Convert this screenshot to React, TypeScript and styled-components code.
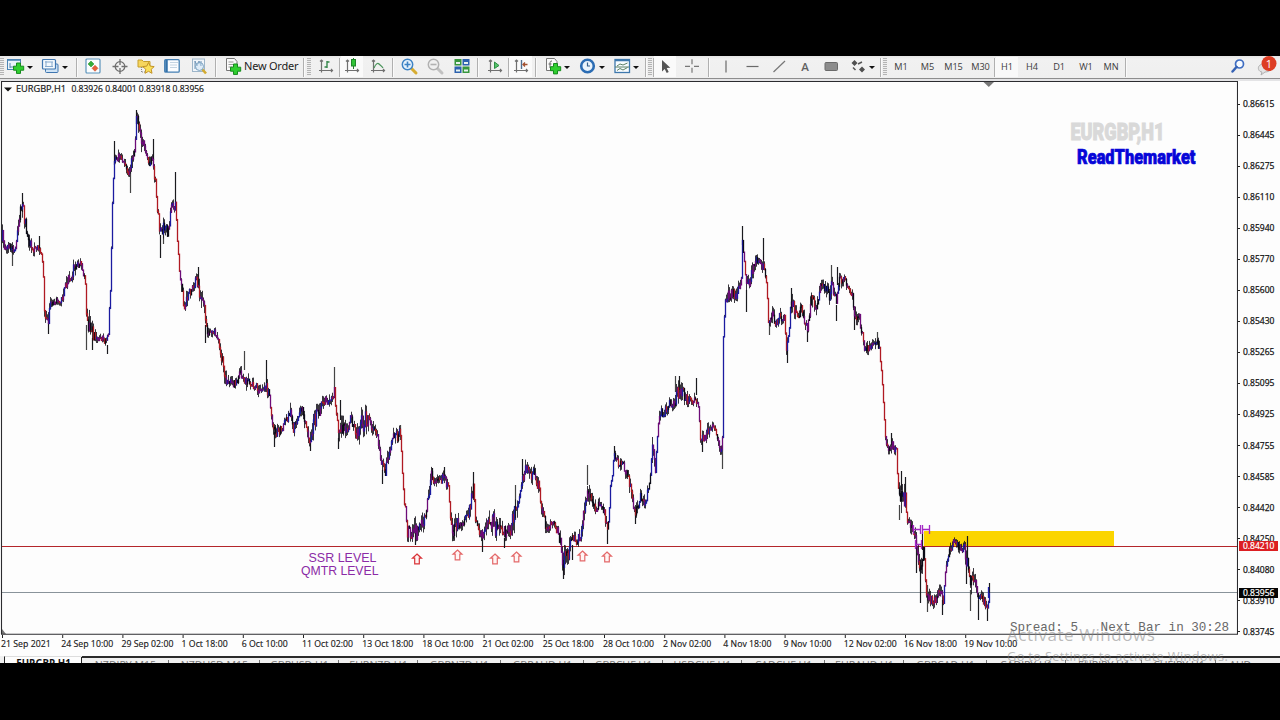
import React from 'react';
import styled, { createGlobalStyle } from 'styled-components';

const Global = createGlobalStyle`
  * { box-sizing: border-box; }
  body { margin: 0; background: #000; font-family: "Open Sans", "Noto Sans", sans-serif; }
`;

const Screen = styled.div`
  width: 1280px;
  height: 720px;
  padding: 56px 0 57px;
  background: #000;
  overflow: hidden;
`;
const Terminal = styled.div`
  position: relative;
  display: flex;
  flex-direction: column;
  height: 607px;
  overflow: hidden;
  background: #fdfdfd;
`;
const Toolbar = styled.div`
  display: flex;
  align-items: center;
  height: 23px;
  flex: none;
  background: linear-gradient(#e6e6e6, #f1f1f1 15%, #efefef);
  border-bottom: 1px solid #8d8d8d;
`;
const Strip = styled.div`
  height: 2px;
  flex: none;
  background: #e4e4e6;
`;
const IconCell = styled.span<{ $gap: number; $pressed?: boolean }>`
  display: flex;
  flex: none;
  width: 18px;
  height: 18px;
  margin: -2px 0 0 ${(p) => p.$gap}px;
  background: ${(p) => (p.$pressed ? '#fafafa' : 'transparent')};
  box-shadow: ${(p) => (p.$pressed ? '0 0 0 2px #fafafa' : 'none')};
`;
const Caret = styled.span<{ $gap: number }>`
  flex: none;
  width: 6px;
  margin: 0 0 0 ${(p) => p.$gap}px;
  border: 3px solid transparent;
  border-top-color: #111;
  border-bottom: 0;
`;
const Separator = styled.span<{ $gap: number }>`
  flex: none;
  width: 2px;
  height: 19px;
  margin-left: ${(p) => p.$gap}px;
  border-left: 1px solid #b0b0b0;
  background: #fafafa;
`;
const Grip = styled.span<{ $gap: number }>`
  flex: none;
  width: 4px;
  height: 18px;
  margin-left: ${(p) => p.$gap}px;
  background: repeating-linear-gradient(#b4b4b4 0 1px, #eee 1px 2px);
`;
const OrderLabel = styled.span`
  flex: none;
  width: 56px;
  margin: -3px 0 0 2px;
  font-family: "Noto Sans", sans-serif;
  font-size: 11px;
  letter-spacing: -0.22px;
  line-height: 16px;
  color: #1c1c1c;
  white-space: nowrap;
`;
const Period = styled.span<{ $w: number; $active?: boolean }>`
  flex: none;
  width: ${(p) => p.$w}px;
  height: 20px;
  line-height: 20px;
  text-align: center;
  font-size: 9.2px;
  letter-spacing: -0.1px;
  color: #3c3c3c;
  background: ${(p) => (p.$active ? '#f9f9f9' : 'transparent')};
`;
const Workspace = styled.div`
  display: flex;
  height: 554px;
  flex: none;
`;
const PriceAxis = styled.div`
  position: relative;
  display: flex;
  flex-direction: column;
  justify-content: space-between;
  width: 42px;
  padding: 17px 0 0;
  height: 557px;
`;
const Price = styled.span`
  display: flex;
  align-items: center;
  height: 12px;
  gap: 3px;
  line-height: 12px;
  font-size: 8.5px;
  color: #141414;
  -webkit-text-stroke: 0.25px #141414;
  &::before {
    content: '';
    width: 2px;
    height: 1px;
    background: #222;
  }
`;
const PriceTag = styled.span<{ $top: number; $color: string }>`
  position: absolute;
  left: 1px;
  top: ${(p) => p.$top}px;
  width: 39px;
  height: 10px;
  padding-left: 4px;
  line-height: 10px;
  font-size: 8.5px;
  color: #fff;
  -webkit-text-stroke: 0.2px #fff;
  background: ${(p) => p.$color};
`;
const TimeAxis = styled.div`
  display: flex;
  flex: none;
  height: 21px;
  padding: 1px 0 0 1px;
`;
const Time = styled.span`
  flex: none;
  width: 60.2px;
  line-height: 16px;
  font-size: 8.7px;
  letter-spacing: 0.04px;
  white-space: nowrap;
  color: #161616;
  -webkit-text-stroke: 0.15px #161616;
`;
const Tabs = styled.div`
  display: flex;
  flex: none;
  height: 8px;
  padding-left: 4px;
  overflow: hidden;
  background: #f0f0f0;
`;
const Tab = styled.span<{ $w: number; $active?: boolean }>`
  flex: none;
  position: relative;
  width: ${(p) => p.$w}px;
  height: 20px;
  text-align: center;
  line-height: 14px;
  font-size: ${(p) => (p.$active ? 9.7 : 10.6)}px;
  white-space: nowrap;
  overflow: hidden;
  font-weight: ${(p) => (p.$active ? 700 : 400)};
  color: ${(p) => (p.$active ? '#111' : '#777')};
  background: ${(p) => (p.$active ? '#fdfdfd' : '#f0f0f0')};
  border-top: ${(p) => (p.$active ? '1px solid #ddd' : '2px solid #2b2b2b')};
  border-left: ${(p) => (p.$active ? '1px solid #222' : '0')};
  &::after {
    content: '';
    position: absolute;
    right: 0;
    top: ${(p) => (p.$active ? 0 : 2)}px;
    width: 1px;
    height: 12px;
    background: ${(p) => (p.$active ? '#222' : '#777')};
  }
`;
const Activation = styled.div`
  position: absolute;
  left: 1007px;
  top: 568px;
  color: rgba(130, 130, 130, 0.55);
  white-space: nowrap;
`;
const ActivationTitle = styled.div`
  font-size: 17px;
  line-height: 22px;
  letter-spacing: 0.55px;
`;
const ActivationHint = styled.div`
  font-size: 12.8px;
  line-height: 20px;
  letter-spacing: 0.33px;
`;

/* ---------- toolbar glyphs, all on an 18 x 18 grid ---------- */
const Plus = ({ x = 7, y = 5.5 }: { x?: number; y?: number }) => (
  <path
    transform={`translate(${x} ${y})`}
    d="M3.500 .5h4v3.200h3.200v4H7.500v3.200h-4V7.700H.5v-4h3z"
    fill="#2fce2f"
    stroke="#168a1e"
    strokeWidth="1"
  />
);
const Axes = () => (
  <path d="M4.500 3v12.500M2 13.500h13.500M3 4.500l1.500-1.500 1.500 1.500M14 12l1.500 1.500L14 15" fill="none" stroke="#707070" strokeWidth="1.200" />
);
const Lens = ({ color, handle, plus }: { color: string; handle: string; plus?: boolean }) => (
  <>
    <path d="M11 11l5 5" stroke={handle} strokeWidth="3" strokeLinecap="round" />
    <circle cx="7.500" cy="7.500" r="5.200" fill={plus ? '#e6f2fc' : '#f0f0f0'} stroke={color} strokeWidth="1.500" />
    <path d={plus ? 'M4.500 7.500h6M7.500 4.500v6' : 'M4.500 7.500h6'} stroke={color} strokeWidth="1.600" />
  </>
);

const glyphs: Record<string, React.ReactNode> = {
  newChart: (
    <>
      <rect x="1.500" y="2.500" width="13" height="10" fill="#e9f3fb" stroke="#4b84b4" />
      <path d="M2 3.500h12" stroke="#6c9cc4" />
      <path d="M4 11V6M4 10h5" stroke="#5a85ad" fill="none" />
      <Plus />
    </>
  ),
  profiles: (
    <>
      <rect x="4.500" y="7" width="12.500" height="8.500" rx="1" fill="#cfe3f5" stroke="#3f76b0" />
      <rect x="1.500" y="2.500" width="13" height="9.500" rx="1" fill="#f2f8fd" stroke="#3f76b0" strokeWidth="1.200" />
      <path d="M4 5h8M4 9.500h8M5 4v6M11 5v5" stroke="#86a9cd" />
    </>
  ),
  market: (
    <>
      <rect x="2" y="2" width="14" height="14" rx="1" fill="#fbfdfe" stroke="#5b93bb" strokeWidth="1.200" />
      <path d="M7 4l3 3-3 3-3-3z" fill="#35ad38" stroke="#258a2a" strokeWidth=".5" />
      <path d="M11 8.300l3 3-3 3-3-3z" fill="#e8603a" stroke="#c14422" strokeWidth=".5" />
    </>
  ),
  target: (
    <>
      <circle cx="9" cy="9.500" r="4.800" fill="none" stroke="#6f6f6f" strokeWidth="1.300" />
      <path d="M9 2v6M9 11v6M1.500 9.500h6M10.500 9.500h6" stroke="#6f6f6f" strokeWidth="1.300" />
    </>
  ),
  navigator: (
    <>
      <path d="M1 3h4l1.500 1.500H13V10H1z" fill="#f6d65f" stroke="#c59e2d" />
      <path d="M4.500 10v6M5 15h4" stroke="#888" strokeDasharray="1 1" />
      <path d="M11.500 5.500l1.700 3.600 4 .5-3 2.700.8 4-3.500-2-3.500 2 .8-4-3-2.700 4-.5z" fill="#fae05b" stroke="#c39325" />
    </>
  ),
  dataPanel: (
    <>
      <rect x="1.700" y="2.700" width="14.500" height="12.500" rx="1" fill="#fbfdff" stroke="#447fb3" strokeWidth="1.300" />
      <path d="M3.500 3v12" stroke="#3472aa" strokeWidth="2.500" />
      <path d="M7 5.500h8M7 8h7M7 10.500h7" stroke="#c4d4e2" />
    </>
  ),
  tester: (
    <>
      <rect x="2.500" y="2" width="12" height="12.500" fill="#f0f5fa" stroke="#9db5c9" />
      <path d="M5 12V4l2 5 2-5 2 5V4" fill="none" stroke="#7195b6" />
      <path d="M12 12l4 4.500" stroke="#d3ab30" strokeWidth="2.600" />
      <circle cx="9.500" cy="9.500" r="4" fill="#cfe4f588" stroke="#7da3c2" />
    </>
  ),
  order: (
    <>
      <path d="M2.500 1.500h8l2.500 3v9h-10.500z" fill="#fafafa" stroke="#777" />
      <path d="M4.500 5h5M4.500 7.500h6M4.500 10h4" stroke="#999" />
      <Plus x={6} y={6.5} />
    </>
  ),
  bars: (
    <>
      <Axes />
      <path d="M10 4v7M10 5h2.500M7.500 10H10" stroke="#35864a" strokeWidth="1.400" />
    </>
  ),
  candles: (
    <>
      <Axes />
      <path d="M10.500 1v11" stroke="#257c2b" />
      <rect x="8.500" y="2.500" width="4" height="6.500" fill="#30c436" stroke="#20852a" />
    </>
  ),
  line: (
    <>
      <Axes />
      <path d="M5 11c2-5 4-5 5-4s3 2 4 4" fill="none" stroke="#4b955c" strokeWidth="1.200" />
    </>
  ),
  zoomIn: <Lens color="#3d83c5" handle="#d6ac32" plus />,
  zoomOut: <Lens color="#b1b1b1" handle="#c1c1c1" />,
  tile: (
    <>
      <path d="M1.500 2h7v6.500h-7zM9.500 9.500h7V16h-7z" fill="#37963d" />
      <path d="M9.500 2h7v6.500h-7zM1.500 9.500h7V16h-7z" fill="#2c61ae" />
      <path d="M3 5h4v2H3zM11 5h4v2h-4zM3 12.500h4v2H3zM11 12.500h4v2h-4z" fill="#e8f3ef" />
    </>
  ),
  scroll: (
    <>
      <Axes />
      <path d="M8.500 5l4.500 3.500-4.500 3z" fill="#55c36a" stroke="#2d8d44" />
    </>
  ),
  shift: (
    <>
      <Axes />
      <path d="M9.500 3v9" stroke="#4f6e8f" strokeWidth="1.400" />
      <path d="M11 7.500h4.500M13 5.500l-2 2 2 2" fill="none" stroke="#a3502f" strokeWidth="1.300" />
    </>
  ),
  indicators: (
    <>
      <path d="M2.500 1.500h8l2.500 3v9h-10.500z" fill="#fafafa" stroke="#777" />
      <path d="M8 4c-2 0-2 1-2 3v4M4.500 7h3" fill="none" stroke="#666" />
      <Plus x={6} y={6} />
    </>
  ),
  clock: (
    <>
      <circle cx="8.500" cy="9" r="6.300" fill="#eaf4fc" stroke="#2c6db4" strokeWidth="2.600" />
      <path d="M8.500 5.500V9H11" fill="none" stroke="#345f8a" strokeWidth="1.200" />
    </>
  ),
  template: (
    <>
      <rect x="2" y="2.500" width="14.500" height="13" fill="#f8fcff" stroke="#3e78ad" strokeWidth="1.300" />
      <path d="M2 3.500h14.500" stroke="#3e78ad" strokeWidth="1.500" />
      <path d="M4 9l3-2 3 1 4.500-2M4 13.500l3-2 3 1.500 4.500-2.500M2 10h14" fill="none" stroke="#5c8065" />
    </>
  ),
  cursor: <path d="M6 3v11.500l2.700-2.600 2 4 2-1-2-3.900 3.600-.2z" fill="#555" />,
  cross: <path d="M9 2.300v5M9 10.800v5M2 9.300h5M11 9.300h5" stroke="#777" strokeWidth="1.200" />,
  vertical: <path d="M9 3.500v12" stroke="#6a6a6a" strokeWidth="1.200" />,
  horizontal: <path d="M3.500 9.500h12" stroke="#6a6a6a" strokeWidth="1.200" />,
  trend: <path d="M3.500 15L15 4" stroke="#777" strokeWidth="1.200" />,
  text: (
    <text x="9" y="14" textAnchor="middle" fontSize="11.500" fontWeight="600" fill="#616161">
      A
    </text>
  ),
  rect: <rect x="3" y="5.500" width="12.500" height="8" rx="1" fill="#8c8c8c" stroke="#6a6a6a" />,
  arrows: (
    <>
      <path d="M5.500 3l3 3-3 3-3-3zM13 9.500l3 3-3 3-3-3z" fill="#505050" />
      <path d="M4 10.500l2.500 2.500M9 7l4-2" stroke="#555" strokeWidth="1.500" />
    </>
  ),
  search: (
    <>
      <circle cx="10.500" cy="7" r="4" fill="#f6faff" stroke="#3e6dc1" strokeWidth="1.700" />
      <path d="M7.500 10L3.500 14.500" stroke="#3662b4" strokeWidth="2.500" strokeLinecap="round" />
    </>
  ),
  alert: (
    <>
      <path d="M5 7c-7 1-5 8-1 8l-1 3 4-3c5 0 7-3 5-6z" fill="#e4e4e4" stroke="#b0b0b0" />
      <circle cx="11" cy="6.500" r="7.500" fill="#dd3d24" />
      <text x="11" y="10.500" textAnchor="middle" fontSize="11" fill="#fff">
        1
      </text>
    </>
  ),
};

const Icon = ({ name, gap, pressed }: { name: string; gap: number; pressed?: boolean }) => (
  <IconCell $gap={gap} $pressed={pressed}>
    <svg width="18" height="18" viewBox="0 0 18 18" overflow="visible">
      {glyphs[name]}
    </svg>
  </IconCell>
);

/* ---------- price series: x, centre, half range ---------- */
const series: number[] = [
  2,240,12, 5,250,5, 8,248,5, 12,250,6, 16,243,4, 18,225,8, 20,213,8, 23,212,9, 26,228,8, 29,245,8, 32,248,6, 38,250,6,
  41,252,6, 43,275,4, 44,310,9, 47,325,9, 48,318,10, 50,303,5, 53,300,4, 58,300,4, 62,299,6, 65,285,7, 68,280,8, 70,283,8,
  73,270,8, 76,266,6, 80,266,6, 83,272,5, 85,285,4, 86,320,9, 89,325,12, 92,335,11, 95,337,6, 99,336,4, 103,338,4,
  106,344,5, 108,330,6, 110,290,4, 112,200,7, 114,167,9, 118,158,7, 122,161,5, 126,167,5, 130,172,6, 132,155,10,
  134,145,8, 136,122,9, 138,130,12, 142,145,8, 146,152,7, 150,162,6, 153,163,9, 155,180,9, 157,205,7, 159,227,7,
  163,228,8, 167,232,6, 171,210,6, 175,203,6, 177,240,4, 179,275,7, 182,300,12, 185,303,7, 188,295,8, 192,284,6,
  195,282,7, 198,285,8, 201,300,10, 204,310,9, 207,332,7, 211,333,5, 215,332,6, 219,345,4, 222,362,9, 225,380,9,
  229,385,6, 234,382,6, 239,376,6, 243,372,8, 246,390,11, 250,380,8, 254,388,6, 258,390,6, 262,385,5, 266,383,7,
  269,400,8, 271,420,7, 275,434,7, 279,428,7, 283,425,4, 287,418,5, 290,410,7, 293,430,8, 296,420,7, 299,407,7,
  303,415,8, 306,430,5, 310,438,9, 315,420,11, 320,405,8, 325,400,6, 330,400,5, 334,392,8, 336,415,11, 338,435,8,
  341,425,11, 346,430,6, 350,418,7, 354,428,6, 358,435,9, 362,420,14, 366,420,11, 370,425,7, 376,432,5, 380,455,8,
  384,475,9, 388,455,7, 392,437,8, 397,436,6, 400,432,6, 402,470,4, 404,500,6, 407,530,9, 410,535,6, 413,522,15,
  416,535,9, 420,522,7, 424,520,10, 428,495,8, 431,476,7, 435,480,5, 440,482,5, 444,474,7, 448,490,5, 450,515,10,
  452,528,12, 456,525,10, 461,522,7, 467,518,6, 470,505,9, 473,490,13, 476,525,8, 482,537,6, 486,525,8, 491,518,12,
  495,527,12, 500,525,7, 505,532,7, 510,530,7, 514,515,14, 518,510,12, 521,480,9, 525,470,8, 531,476,7, 535,474,8,
  538,485,8, 541,510,8, 545,524,7, 551,525,6, 557,532,6, 560,545,12, 563,560,12, 567,558,12, 571,540,7, 577,540,6,
  581,535,7, 584,510,9, 587,485,10, 591,500,10, 595,507,6, 600,502,4, 604,515,7, 607,530,7, 610,490,8, 614,453,5,
  618,462,5, 623,468,7, 628,478,8, 632,500,8, 635,510,8, 640,498,7, 645,502,5, 649,480,6, 652,450,10, 655,470,7,
  657,440,5, 659,412,7, 662,413,5, 668,407,6, 673,400,8, 678,392,9, 683,394,8, 688,400,6, 692,405,4, 695,395,8,
  698,405,4, 700,435,6, 703,440,7, 708,430,7, 713,425,5, 717,440,6, 720,455,7, 722,440,5, 723,340,6, 725,300,7,
  727,292,8, 731,294,6, 736,295,8, 741,280,4, 742,245,8, 745,275,5, 746,290,9, 750,278,7, 754,265,8, 758,262,6,
  763,262,9, 766,280,4, 768,320,7, 771,315,8, 776,320,6, 781,316,7, 784,316,5, 786,350,8, 788,340,6, 790,310,5,
  792,305,10, 797,311,7, 802,308,8, 807,330,6, 811,302,11, 815,310,9, 819,288,6, 823,286,5, 828,295,9, 832,285,11,
  836,305,8, 838,282,7, 843,282,7, 848,286,4, 852,295,5, 854,310,10, 859,318,8, 862,335,4, 864,348,5, 868,346,7,
  873,342,4, 876,343,7, 879,350,8, 881,368,5, 883,400,3, 885,435,4, 887,447,6, 892,446,6, 896,448,6, 898,490,6,
  901,498,12, 905,500,12, 907,520,4, 911,530,8, 914,530,7, 917,548,8, 920,565,10, 923,555,14, 926,590,6, 930,600,7,
  935,603,6, 939,590,6, 943,600,7, 946,565,5, 949,548,7, 953,542,4, 958,546,5, 964,550,7, 967,560,12, 970,590,11,
  973,575,9, 977,595,8, 982,598,6, 987,607,4, 988,600,4, 989,593,4,
];
const spikes: number[][] = [
  [12,250,266], [22,193,212], [39,236,250], [48,320,334], [86,325,350], [92,338,350], [107,345,354], [114,141,165],
  [130,172,193], [136,110,124], [153,139,160], [160,235,258], [163,230,244], [175,172,202], [198,267,285], [205,325,343],
  [244,351,370], [266,360,385], [274,432,447], [310,440,451], [334,367,398], [340,400,420], [338,438,449],
  [382,470,484], [400,425,440], [415,530,545], [432,468,480], [444,467,478], [453,530,541], [473,472,496], [482,535,552],
  [504,538,548], [515,485,520], [522,459,475], [563,560,579], [572,545,560], [587,465,485], [607,530,544], [614,446,456],
  [635,512,524], [675,376,392], [679,376,390], [696,378,395], [702,440,452], [722,450,469], [742,226,245], [746,290,312],
  [763,238,260], [769,320,335], [787,350,363], [791,288,305], [807,330,342], [831,265,285], [837,267,285], [836,305,321],
  [854,310,330], [877,332,345], [891,433,445], [901,471,490], [905,477,500], [899,505,520], [916,540,573], [920,560,603],
  [922,532,550], [927,585,612], [942,600,615], [967,536,560], [966,560,584], [970,590,611], [978,600,620], [987,606,621],
  [989,583,593],
];

let seed = 29;
const rand = () => {
  seed = (seed * 16807) % 2147483647;
  return seed / 2147483647;
};
const bars: { x: number; hi: number; lo: number; top: number; bottom: number; color: string }[] = [];
{
  let k = 0;
  let prev = series[1];
  let drift = 0;
  for (let x = 2; x <= 989; x++) {
    while (k + 3 < series.length - 3 && series[k + 3] <= x) k += 3;
    const t = Math.min(1, (x - series[k]) / (series[k + 3] - series[k]));
    const y = series[k + 1] + t * (series[k + 4] - series[k + 1]);
    const a = series[k + 2] + t * (series[k + 5] - series[k + 2]);
    drift = drift * 0.2 + (rand() - 0.5) * 1.6;
    const close = y + drift * a;
    const top = Math.min(prev, close);
    const bottom = Math.max(prev, close);
    const delta = close - prev;
    const shade = rand();
    let color = delta < 0 ? '#1b1ba0' : '#b01a22';
    if (Math.abs(delta) < 14 && shade < 0.36) color = '#6d0c78';
    else if (Math.abs(delta) < 14 && shade < 0.58) color = '#0b0b16';
    const slope = Math.abs(series[k + 4] - series[k + 1]) / (series[k + 3] - series[k]);
    const reach = slope > 9 ? 0.3 : 1;
    const hi = Math.min(top, Math.max(y - a * 1.3, top - Math.pow(rand(), 1.2) * a * 1.1 * reach));
    const lo = Math.max(bottom, Math.min(y + a * 1.3, bottom + Math.pow(rand(), 1.2) * a * 1.1 * reach));
    bars.push({ x: x + 0.5, hi, lo, top: top - 0.5, bottom: bottom + 1, color });
    prev = close;
  }
}

const arrowMarks = [[417, 559], [457.5, 555], [495, 559], [516.5, 557], [582.5, 556], [607, 557]];
const ticks = Array.from({ length: 17 }, (_, i) => 2.5 + i * 60.2);

const Chart = () => (
  <svg width="1238" height="554" viewBox="0 81 1238 554">
    <rect x="0" y="81" width="1238" height="554" fill="#fdfdfd" />
    <rect x="924" y="531" width="190" height="15" fill="#fbd500" />
    <path d="M2 592.500H1238" stroke="#89939a" strokeWidth="1" />
    <path d="M2 546.500H1238" stroke="#b4262b" strokeWidth="1.200" />
    {spikes.map(([x, a, b], i) => (
      <path key={i} d={`M${x + 0.5} ${a}V${b}`} stroke={i % 4 ? '#1a1a1e' : '#444'} strokeWidth="1.200" />
    ))}
    {bars.map((b) => (
      <g key={b.x}>
        <path d={`M${b.x} ${b.hi}V${b.lo}`} stroke="#17141c" strokeOpacity=".85" strokeWidth="1" />
        <path d={`M${b.x} ${b.top}V${b.bottom}`} stroke={b.color} strokeWidth="1.300" />
      </g>
    ))}
    <path d="M988.500 598V587" stroke="#1f1fb0" strokeWidth="1.300" />
    <path
      d="M913.500 525v9M920.500 525v9M913 529.500h8M922.500 525v9M929.500 525v9M922 529.500h8M915.500 540v9M921.500 540v9M915 544.500h7"
      stroke="#a32bc4"
      strokeWidth="1.300"
    />
    {arrowMarks.map(([x, y], i) => (
      <path
        key={x}
        transform={`translate(${x} ${y})`}
        d="M0-5L4.500-.8H2.300V4.800H-2.300V-.8H-4.500Z"
        fill="#fff5f4"
        stroke={i ? '#e4696a' : '#d93338'}
        strokeWidth="1.200"
      />
    ))}
    <g fontFamily="Liberation Sans, sans-serif" fontSize="13.300" fill="#8b2ba6">
      <text x="308.500" y="562" textLength="68" lengthAdjust="spacingAndGlyphs">SSR LEVEL</text>
      <text x="301" y="575" textLength="77.500" lengthAdjust="spacingAndGlyphs">QMTR LEVEL</text>
    </g>
    <path d="M4 87.500h8l-4 4z" fill="#111" />
    <g fontSize="8.800" fill="#1a1a1a" stroke="#1a1a1a" strokeWidth=".2">
      <text x="16" y="92" textLength="50" lengthAdjust="spacingAndGlyphs">EURGBP,H1</text>
      <text x="71.500" y="92" textLength="132.500" lengthAdjust="spacingAndGlyphs">0.83926 0.84001 0.83918 0.83956</text>
    </g>
    <path d="M983.500 82h10.500l-5.200 5z" fill="#777" />
    <g fontFamily="Roboto, sans-serif" fontWeight="900">
      <text x="1070.500" y="140" fontSize="24" fill="#d9d9d9" stroke="#d9d9d9" strokeWidth="1" textLength="94" lengthAdjust="spacingAndGlyphs">EURGBP,H1</text>
      <text x="1077" y="164" fontSize="19.500" fill="#0606d8" stroke="#0606d8" strokeWidth=".7" textLength="118.500" lengthAdjust="spacingAndGlyphs">ReadThemarket</text>
    </g>
    <text x="1010" y="631" fontFamily="Liberation Mono, monospace" fontSize="12.600" fill="#686868" textLength="219" style={{ whiteSpace: 'pre' }}>
      {'Spread: 5   Next Bar in 30:28'}
    </text>
    <path d="M2 629l4 5H2z" fill="#777" />
    <path d="M1.500 634V81.500H1237.500V634M1 634.200H1238" fill="none" stroke="#2c2c30" strokeWidth="1.100" />
  </svg>
);

const TickRow = styled.svg`
  display: block;
  flex: none;
  margin-bottom: -3px;
`;

const prices = ['0.86615', '0.86445', '0.86275', '0.86110', '0.85940', '0.85770', '0.85600', '0.85430', '0.85265',
  '0.85095', '0.84925', '0.84755', '0.84585', '0.84420', '0.84250', '0.84080', '0.83910', '0.83745'];
const times = ['21 Sep 2021', '24 Sep 10:00', '29 Sep 02:00', '1 Oct 18:00', '6 Oct 10:00', '11 Oct 02:00',
  '13 Oct 18:00', '18 Oct 10:00', '21 Oct 02:00', '25 Oct 18:00', '28 Oct 10:00', '2 Nov 02:00', '4 Nov 18:00',
  '9 Nov 10:00', '12 Nov 02:00', '16 Nov 18:00', '19 Nov 10:00'];
const tabs: [string, number][] = [['NZDJPY,M15', 87], ['NZDUSD,M15', 91], ['GBPUSD,H1', 79], ['EURNZD,H1', 79],
  ['GBPNZD,H1', 83], ['GBPAUD,H1', 83], ['GBPCHF,H1', 79], ['USDCHF,H1', 79], ['CADCHF,H1', 83], ['EURAUD,H1', 79],
  ['GBPCAD,H1', 83], ['CADJPY,H1', 79], ['EURJPY,H1', 76], ['CHFJPY,H1', 74], ['AUD ◂ ▸', 66]];

const App = () => (
  <Screen>
    <Global />
    <Terminal>
      <Toolbar>
        <Grip $gap={0} />
        <Icon name="newChart" gap={2} />
        <Caret $gap={3} />
        <Icon name="profiles" gap={8} />
        <Caret $gap={3} />
        <Separator $gap={8} />
        <Icon name="market" gap={6} />
        <Icon name="target" gap={9} />
        <Icon name="navigator" gap={8} />
        <Icon name="dataPanel" gap={8} />
        <Icon name="tester" gap={9} />
        <Separator $gap={7} />
        <Icon name="order" gap={7} />
        <OrderLabel>New Order</OrderLabel>
        <Separator $gap={3} />
        <Grip $gap={2} />
        <Icon name="bars" gap={6} />
        <Separator $gap={4} />
        <Icon name="candles" gap={2} pressed />
        <Icon name="line" gap={8} />
        <Separator $gap={5} />
        <Icon name="zoomIn" gap={6} />
        <Icon name="zoomOut" gap={8} />
        <Icon name="tile" gap={9} />
        <Separator $gap={6} />
        <Icon name="scroll" gap={7} />
        <Separator $gap={4} />
        <Icon name="shift" gap={2} pressed />
        <Separator $gap={5} />
        <Icon name="indicators" gap={7} />
        <Caret $gap={2} />
        <Icon name="clock" gap={9} />
        <Caret $gap={2} />
        <Icon name="template" gap={8} />
        <Caret $gap={2} />
        <Separator $gap={6} />
        <Grip $gap={1} />
        <Separator $gap={1} />
        <Icon name="cursor" gap={1} pressed />
        <Icon name="cross" gap={9} />
        <Separator $gap={7} />
        <Icon name="vertical" gap={7} />
        <Icon name="horizontal" gap={8} />
        <Icon name="trend" gap={9} />
        <Icon name="text" gap={8} />
        <Icon name="rect" gap={8} />
        <Icon name="arrows" gap={9} />
        <Caret $gap={2} />
        <Separator $gap={5} />
        <Grip $gap={1} />
        <Period $w={28}>M1</Period>
        <Period $w={25}>M5</Period>
        <Period $w={27}>M15</Period>
        <Period $w={27}>M30</Period>
        <Separator $gap={0} />
        <Period $w={22} $active>H1</Period>
        <Period $w={28}>H4</Period>
        <Period $w={26}>D1</Period>
        <Period $w={28}>W1</Period>
        <Period $w={22}>MN</Period>
        <Separator $gap={3} />
        <Icon name="search" gap={102} />
        <Icon name="alert" gap={11} />
      </Toolbar>
      <Strip />
      <Workspace>
        <Chart />
        <PriceAxis>
          {prices.map((p) => (
            <Price key={p}>{p}</Price>
          ))}
          <PriceTag $top={460} $color="#dc1f22">0.84210</PriceTag>
          <PriceTag $top={507} $color="#050505">0.83956</PriceTag>
        </PriceAxis>
      </Workspace>
      <TickRow width="1238" height="3" viewBox="0 0 1238 3">
        {ticks.map((x) => (
          <path key={x} d={`M${x} 0v3`} stroke="#222" />
        ))}
      </TickRow>
      <TimeAxis>
        {times.map((t) => (
          <Time key={t}>{t}</Time>
        ))}
      </TimeAxis>
      <Tabs>
        <Tab $w={78} $active>EURGBP,H1</Tab>
        {tabs.map(([name, w]) => (
          <Tab key={name} $w={w}>{name}</Tab>
        ))}
      </Tabs>
      <Activation>
        <ActivationTitle>Activate Windows</ActivationTitle>
        <ActivationHint>Go to Settings to activate Windows.</ActivationHint>
      </Activation>
    </Terminal>
  </Screen>
);

export default App;
